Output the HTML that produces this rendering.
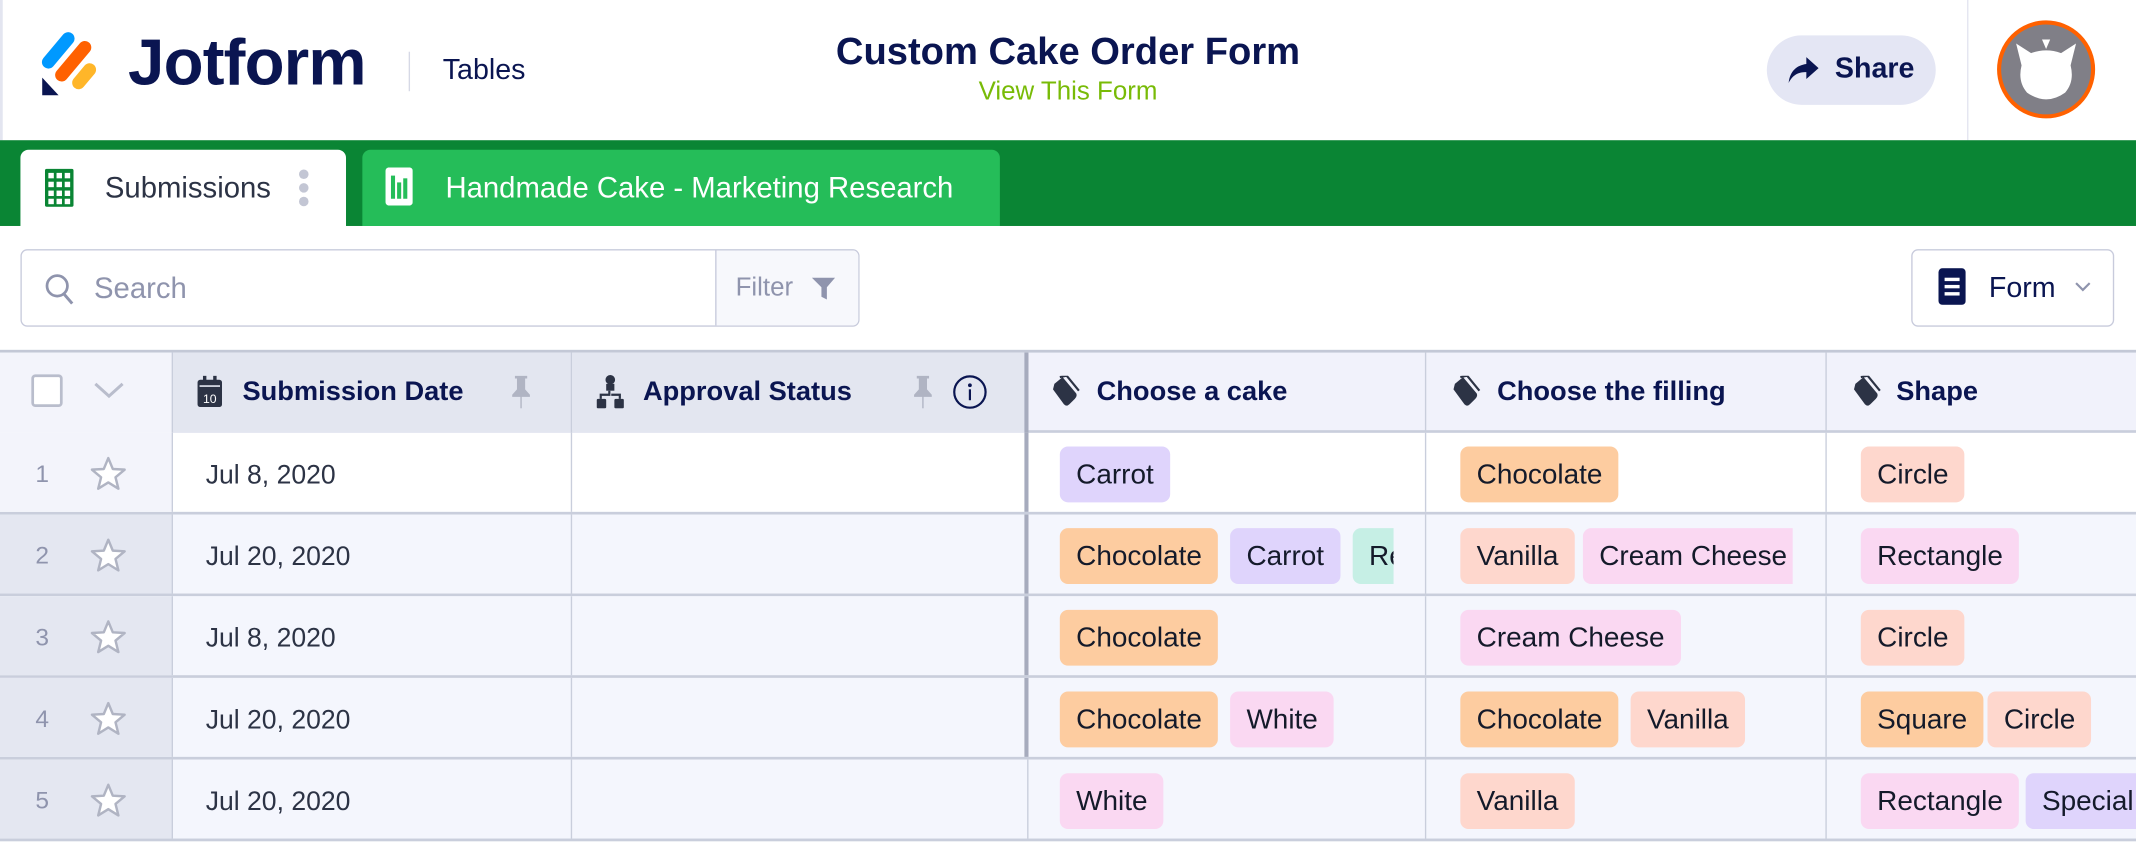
<!DOCTYPE html>
<html><head><meta charset="utf-8">
<style>
*{box-sizing:border-box;margin:0;padding:0}
html,body{width:2136px;height:844px;overflow:hidden;background:#fff}
#w{position:absolute;left:0;top:0;width:1568px;height:620px;transform:scale(1.36224,1.36129);transform-origin:0 0;font-family:"Liberation Sans",sans-serif;color:#0a1551}
.a{position:absolute}
.tag{position:absolute;top:10px;height:41px;line-height:41px;padding:0 12px;border-radius:6px;font-size:20.5px;color:#141a2a;white-space:nowrap}
.o{background:#fdcca0}.p{background:#dfd4fc}.k{background:#fed7cd}.m{background:#fad8f2}.t{background:#c6efe5}
.row{position:absolute;left:0;width:1568px;height:60px;border-bottom:2px solid #c9cedc;background:#f4f6fd}
.cell{position:absolute;top:0;height:58px;overflow:hidden;border-right:1.5px solid #c9cedc}
.idx{background:#e4e7f1}
.num{position:absolute;left:26px;top:20px;font-size:18px;color:#8f94ad}
.star{position:absolute;left:66px;top:17px}
.date{position:absolute;left:24px;top:20px;font-size:19.5px;color:#2c3345}
.hd{position:absolute;top:0;height:60px;border-right:1.5px solid #c9cedc}
.hl{position:absolute;top:17px;font-size:20px;font-weight:bold;color:#0a1551}
</style></head><body><div id="w">
<div class="a" style="left:0;top:0;width:1568px;height:103px;background:#fff;border-left:2px solid #e3e5f0"></div>
<svg class="a" style="left:28px;top:22px" width="48" height="50" viewBox="0 0 48 50">
<rect x="10" y="-1" width="9.5" height="32" rx="4.75" transform="rotate(40 14.75 15)" fill="#0099ff"/>
<rect x="21" y="5" width="9.5" height="36" rx="4.75" transform="rotate(40 25.75 23)" fill="#ff6100"/>
<rect x="29" y="23" width="9.5" height="22" rx="4.75" transform="rotate(40 33.75 34)" fill="#ffb629"/>
<path d="M3 35 L3 48 L15 48 Z" fill="#0a1551"/>
</svg>
<div class="a" style="left:94px;top:19px;font-size:48px;font-weight:bold;letter-spacing:-0.6px;color:#0a1551">Jotform</div>
<div class="a" style="left:300px;top:38px;width:1px;height:29px;background:#d6d9e6"></div>
<div class="a" style="left:325px;top:40px;font-size:21px;color:#0a1551">Tables</div>
<div class="a" style="left:584px;top:22px;width:400px;text-align:center;font-size:28px;font-weight:bold;color:#0a1551">Custom Cake Order Form</div>
<div class="a" style="left:584px;top:57px;width:400px;text-align:center;font-size:19px;color:#78bb07">View This Form</div>
<div class="a" style="left:1297px;top:26px;width:124px;height:51px;border-radius:26px;background:#e4e6f4"></div>
<svg class="a" style="left:1312px;top:41px" width="24" height="22" viewBox="0 0 24 22"><path d="M14 1 L23 9 L14 17 L14 12 C8 12 4 14 1 20 C2 11 7 7 14 6 Z" fill="#0a1551"/></svg>
<div class="a" style="left:1347px;top:39px;font-size:21px;font-weight:bold;color:#0a1551">Share</div>
<div class="a" style="left:1444px;top:0;width:1px;height:103px;background:#e3e5f0"></div>
<div class="a" style="left:1466px;top:15px;width:72px;height:72px;border-radius:50%;border:3px solid #ff6100;background:#807f87"></div>
<svg class="a" style="left:1476px;top:26px" width="52" height="50" viewBox="0 0 52 50"><path d="M4 6 L15 13 Q26 9 37 13 L48 6 L44 22 Q47 34 40 42 Q26 52 12 42 Q5 34 8 22 Z M23 3 L26 10 L29 3 Z" fill="#fff"/></svg>
<div class="a" style="left:0;top:103px;width:1568px;height:63px;background:#0a8534"></div>
<div class="a" style="left:15px;top:110px;width:239px;height:56px;background:#fff;border-radius:6px 6px 0 0"></div>
<svg class="a" style="left:33px;top:124px" width="21" height="28" viewBox="0 0 21 28"><rect width="21" height="28" rx="1.5" fill="#0a8534"/><g fill="#fff"><rect x="2.5" y="3" width="4" height="4"/><rect x="8.5" y="3" width="4" height="4"/><rect x="14.5" y="3" width="4" height="4"/><rect x="2.5" y="9.5" width="4" height="4"/><rect x="8.5" y="9.5" width="4" height="4"/><rect x="14.5" y="9.5" width="4" height="4"/><rect x="2.5" y="16" width="4" height="4"/><rect x="8.5" y="16" width="4" height="4"/><rect x="14.5" y="16" width="4" height="4"/><rect x="2.5" y="22" width="4" height="4"/><rect x="8.5" y="22" width="4" height="4"/><rect x="14.5" y="22" width="4" height="4"/></g></svg>
<div class="a" style="left:77px;top:126px;font-size:21.5px;color:#2c3345">Submissions</div>
<svg class="a" style="left:219px;top:124px" width="8" height="28"><circle cx="4" cy="4" r="3.5" fill="#c3c6d4"/><circle cx="4" cy="14" r="3.5" fill="#c3c6d4"/><circle cx="4" cy="24" r="3.5" fill="#c3c6d4"/></svg>
<div class="a" style="left:266px;top:110px;width:468px;height:56px;background:#25bd59;border-radius:6px 6px 0 0"></div>
<svg class="a" style="left:283px;top:123px" width="20" height="28" viewBox="0 0 20 28"><rect width="20" height="28" rx="2.5" fill="#fff"/><g fill="#25bd59"><rect x="4" y="6" width="3" height="17"/><rect x="8.5" y="11" width="3" height="12"/><rect x="13" y="8" width="3" height="15"/></g></svg>
<div class="a" style="left:327px;top:126px;font-size:21.5px;color:#fff">Handmade Cake - Marketing Research</div>
<div class="a" style="left:15px;top:183px;width:616px;height:57px;border:1.5px solid #c8cbdc;border-radius:5px;background:#fff;overflow:hidden"><div class="a" style="left:509px;top:0;width:107px;height:57px;background:#f7f8fc;border-left:1.5px solid #c8cbdc"></div></div>
<svg class="a" style="left:33px;top:201px" width="22" height="24" viewBox="0 0 22 24"><circle cx="9" cy="9" r="7.5" fill="none" stroke="#8f94ad" stroke-width="2"/><path d="M14 15 L20 22" stroke="#8f94ad" stroke-width="2.2"/></svg>
<div class="a" style="left:69px;top:200px;font-size:21.5px;color:#8f94ad">Search</div>
<div class="a" style="left:540px;top:201px;font-size:19px;color:#8f94ad">Filter</div>
<svg class="a" style="left:596px;top:203px" width="17" height="18" viewBox="0 0 17 18"><path d="M0 1 H17 L11 8 V17 L7 15 V8 Z" fill="#8f94ad"/></svg>
<div class="a" style="left:1403px;top:183px;width:149px;height:57px;border:1.5px solid #c8cbdc;border-radius:5px;background:#fff"></div>
<svg class="a" style="left:1423px;top:197px" width="20" height="27" viewBox="0 0 20 27"><rect width="20" height="27" rx="3" fill="#0a1551"/><g fill="#fff"><rect x="4.5" y="7" width="11" height="2.5"/><rect x="4.5" y="12.3" width="11" height="2.5"/><rect x="4.5" y="17.6" width="11" height="2.5"/></g></svg>
<div class="a" style="left:1460px;top:200px;font-size:21px;color:#0a1551">Form</div>
<svg class="a" style="left:1523px;top:207px" width="12" height="8"><path d="M1 1 L6 6 L11 1" fill="none" stroke="#8f94ad" stroke-width="1.6"/></svg>
<div class="a" style="left:0;top:257px;width:1568px;height:61px;background:#f1f2fb;border-top:2px solid #c3c8d6;border-bottom:2px solid #c9cedc">
 <div class="hd" style="left:0;width:127px;background:#f3f4fb"></div>
 <div class="hd" style="left:127px;width:293px;background:#e3e6f0"></div>
 <div class="hd" style="left:420px;width:335px;background:#e3e6f0;border-right:3px solid #a6abbd"></div>
 <div class="hd" style="left:755px;width:292px"></div>
 <div class="hd" style="left:1047px;width:294px"></div>
</div>
<div class="a" style="left:23px;top:275px;width:23px;height:24px;border:2.5px solid #b9bdcc;border-radius:3px;background:#fff"></div>
<svg class="a" style="left:69px;top:281px" width="22" height="12"><path d="M1 1 L11 10 L21 1" fill="none" stroke="#b9bdcc" stroke-width="2.2"/></svg>
<svg class="a" style="left:145px;top:276px" width="18" height="23" viewBox="0 0 18 23"><rect x="0" y="3" width="18" height="20" rx="2" fill="#2c3345"/><rect x="4" y="0" width="2.5" height="5" fill="#2c3345"/><rect x="11.5" y="0" width="2.5" height="5" fill="#2c3345"/><rect x="1.5" y="7" width="15" height="1.2" fill="#e3e6f0"/><text x="9" y="20" font-size="9" fill="#fff" text-anchor="middle" font-family="Liberation Sans">10</text></svg>
<div class="hl" style="left:178px;top:277px">Submission Date</div>
<svg class="a" style="left:375px;top:276px" width="15" height="24" viewBox="0 0 15 24"><path d="M3 0 H12 V2 H10.5 V10 L14 14 V15.5 H1 V14 L4.5 10 V2 H3 Z M7 15.5 H8 V24 H7 Z" fill="#b0b4c3"/></svg>
<svg class="a" style="left:438px;top:275px" width="20" height="25" viewBox="0 0 20 25"><circle cx="10" cy="4" r="3.5" fill="#2c3345"/><rect x="7" y="7" width="6" height="5" fill="#2c3345"/><path d="M9.3 12 V15 H3 V18 M10.7 15 H17 V18" stroke="#2c3345" stroke-width="1.6" fill="none"/><rect x="0" y="18" width="7" height="7" rx="1" fill="#2c3345"/><rect x="13" y="18" width="7" height="7" rx="1" fill="#2c3345"/></svg>
<div class="hl" style="left:472px;top:277px">Approval Status</div>
<svg class="a" style="left:670px;top:276px" width="15" height="24" viewBox="0 0 15 24"><path d="M3 0 H12 V2 H10.5 V10 L14 14 V15.5 H1 V14 L4.5 10 V2 H3 Z M7 15.5 H8 V24 H7 Z" fill="#b0b4c3"/></svg>
<svg class="a" style="left:699px;top:275px" width="26" height="26" viewBox="0 0 26 26"><circle cx="13" cy="13" r="11.5" fill="none" stroke="#0a1551" stroke-width="1.6"/><circle cx="13" cy="8" r="1.4" fill="#0a1551"/><rect x="12.2" y="11" width="1.6" height="8" fill="#0a1551"/></svg>
<svg class="a" style="left:771px;top:276px" width="22" height="24" viewBox="0 0 22 24"><path d="M3 6 L9 1 L19 13 Q20 15 18 17 L14 21 Q12 23 10 21 L2 10 Z" fill="#2c3345"/><path d="M7 1 L12 0 L21 11" stroke="#2c3345" stroke-width="1.6" fill="none"/></svg>
<div class="hl" style="left:805px;top:277px">Choose a cake</div>
<svg class="a" style="left:1065px;top:276px" width="22" height="24" viewBox="0 0 22 24"><path d="M3 6 L9 1 L19 13 Q20 15 18 17 L14 21 Q12 23 10 21 L2 10 Z" fill="#2c3345"/><path d="M7 1 L12 0 L21 11" stroke="#2c3345" stroke-width="1.6" fill="none"/></svg>
<div class="hl" style="left:1099px;top:277px">Choose the filling</div>
<svg class="a" style="left:1359px;top:276px" width="22" height="24" viewBox="0 0 22 24"><path d="M3 6 L9 1 L19 13 Q20 15 18 17 L14 21 Q12 23 10 21 L2 10 Z" fill="#2c3345"/><path d="M7 1 L12 0 L21 11" stroke="#2c3345" stroke-width="1.6" fill="none"/></svg>
<div class="hl" style="left:1392px;top:277px">Shape</div>

<div class="row" style="top:318px;background:#fff">
 <div class="cell" style="left:0;width:127px;background:#f3f4fb"><span class="num">1</span><svg class="star" width="27" height="26" viewBox="0 0 27 26"><path d="M13.5 1.5 L16.8 9.5 L25.5 10 L18.8 15.6 L20.9 24 L13.5 19.4 L6.1 24 L8.2 15.6 L1.5 10 L10.2 9.5 Z" fill="#fff" stroke="#b0b4c3" stroke-width="1.8" stroke-linejoin="round"/></svg></div>
 <div class="cell" style="left:127px;width:293px"><span class="date">Jul 8, 2020</span></div>
 <div class="cell" style="left:420px;width:335px;border-right:3px solid #a6abbd"></div>
 <div class="cell" style="left:755px;width:292px"><span class="tag p" style="left:23px">Carrot</span></div>
 <div class="cell" style="left:1047px;width:294px"><span class="tag o" style="left:25px">Chocolate</span></div>
 <div class="cell" style="left:1341px;width:227px;border:0"><span class="tag k" style="left:25px">Circle</span></div>
</div>
<div class="row" style="top:378px">
 <div class="cell idx" style="left:0;width:127px"><span class="num">2</span><svg class="star" width="27" height="26" viewBox="0 0 27 26"><path d="M13.5 1.5 L16.8 9.5 L25.5 10 L18.8 15.6 L20.9 24 L13.5 19.4 L6.1 24 L8.2 15.6 L1.5 10 L10.2 9.5 Z" fill="#fff" stroke="#b0b4c3" stroke-width="1.8" stroke-linejoin="round"/></svg></div>
 <div class="cell" style="left:127px;width:293px"><span class="date">Jul 20, 2020</span></div>
 <div class="cell" style="left:420px;width:335px;border-right:3px solid #a6abbd"></div>
 <div class="cell" style="left:755px;width:292px"><div class="a" style="left:0;top:0;width:268px;height:58px;overflow:hidden"><span class="tag o" style="left:23px">Chocolate</span><span class="tag p" style="left:148px">Carrot</span><span class="tag t" style="left:238px">Red</span></div></div>
 <div class="cell" style="left:1047px;width:294px"><div class="a" style="left:0;top:0;width:269px;height:58px;overflow:hidden"><span class="tag k" style="left:25px">Vanilla</span><span class="tag m" style="left:115px">Cream Cheese</span></div></div>
 <div class="cell" style="left:1341px;width:227px;border:0"><span class="tag m" style="left:25px">Rectangle</span></div>
</div>
<div class="row" style="top:438px">
 <div class="cell idx" style="left:0;width:127px"><span class="num">3</span><svg class="star" width="27" height="26" viewBox="0 0 27 26"><path d="M13.5 1.5 L16.8 9.5 L25.5 10 L18.8 15.6 L20.9 24 L13.5 19.4 L6.1 24 L8.2 15.6 L1.5 10 L10.2 9.5 Z" fill="#fff" stroke="#b0b4c3" stroke-width="1.8" stroke-linejoin="round"/></svg></div>
 <div class="cell" style="left:127px;width:293px"><span class="date">Jul 8, 2020</span></div>
 <div class="cell" style="left:420px;width:335px;border-right:3px solid #a6abbd"></div>
 <div class="cell" style="left:755px;width:292px"><span class="tag o" style="left:23px">Chocolate</span></div>
 <div class="cell" style="left:1047px;width:294px"><span class="tag m" style="left:25px">Cream Cheese</span></div>
 <div class="cell" style="left:1341px;width:227px;border:0"><span class="tag k" style="left:25px">Circle</span></div>
</div>
<div class="row" style="top:498px">
 <div class="cell idx" style="left:0;width:127px"><span class="num">4</span><svg class="star" width="27" height="26" viewBox="0 0 27 26"><path d="M13.5 1.5 L16.8 9.5 L25.5 10 L18.8 15.6 L20.9 24 L13.5 19.4 L6.1 24 L8.2 15.6 L1.5 10 L10.2 9.5 Z" fill="#fff" stroke="#b0b4c3" stroke-width="1.8" stroke-linejoin="round"/></svg></div>
 <div class="cell" style="left:127px;width:293px"><span class="date">Jul 20, 2020</span></div>
 <div class="cell" style="left:420px;width:335px;border-right:3px solid #a6abbd"></div>
 <div class="cell" style="left:755px;width:292px"><span class="tag o" style="left:23px">Chocolate</span><span class="tag m" style="left:148px">White</span></div>
 <div class="cell" style="left:1047px;width:294px"><span class="tag o" style="left:25px">Chocolate</span><span class="tag k" style="left:150px">Vanilla</span></div>
 <div class="cell" style="left:1341px;width:227px;border:0"><span class="tag o" style="left:25px">Square</span><span class="tag k" style="left:118px">Circle</span></div>
</div>
<div class="row" style="top:558px">
 <div class="cell idx" style="left:0;width:127px"><span class="num">5</span><svg class="star" width="27" height="26" viewBox="0 0 27 26"><path d="M13.5 1.5 L16.8 9.5 L25.5 10 L18.8 15.6 L20.9 24 L13.5 19.4 L6.1 24 L8.2 15.6 L1.5 10 L10.2 9.5 Z" fill="#fff" stroke="#b0b4c3" stroke-width="1.8" stroke-linejoin="round"/></svg></div>
 <div class="cell" style="left:127px;width:293px"><span class="date">Jul 20, 2020</span></div>
 <div class="cell" style="left:420px;width:335px"></div>
 <div class="cell" style="left:755px;width:292px"><span class="tag m" style="left:23px">White</span></div>
 <div class="cell" style="left:1047px;width:294px"><span class="tag k" style="left:25px">Vanilla</span></div>
 <div class="cell" style="left:1341px;width:227px;border:0"><span class="tag m" style="left:25px">Rectangle</span><span class="tag p" style="left:146px">Special</span></div>
</div>
</div></body></html>
